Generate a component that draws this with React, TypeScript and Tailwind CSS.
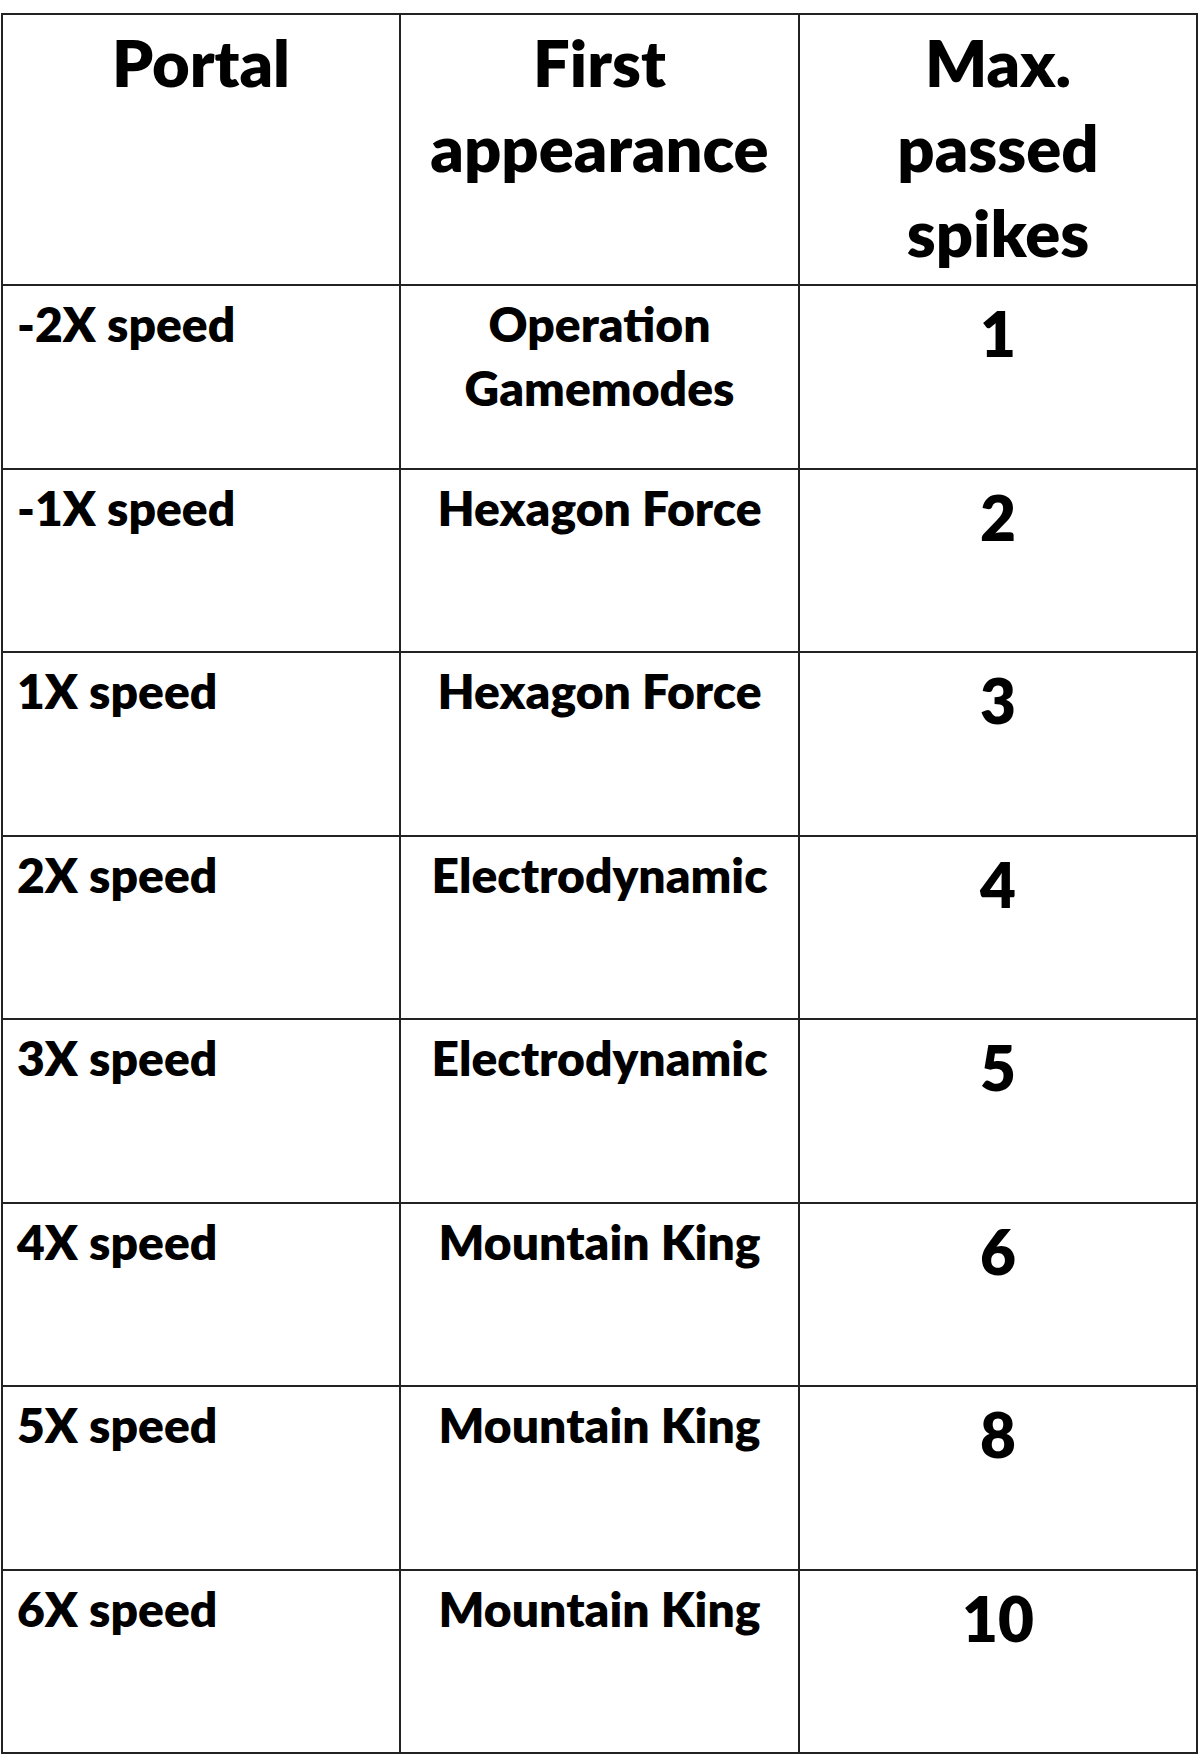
const rows: [string, string[], string][] = [
  ['-2X speed', ['Operation', 'Gamemodes'], '1'],
  ['-1X speed', ['Hexagon Force'], '2'],
  ['1X speed', ['Hexagon Force'], '3'],
  ['2X speed', ['Electrodynamic'], '4'],
  ['3X speed', ['Electrodynamic'], '5'],
  ['4X speed', ['Mountain King'], '6'],
  ['5X speed', ['Mountain King'], '8'],
  ['6X speed', ['Mountain King'], '10'],
]

const cell = 'border-r-2 border-b-2 border-[#222]'

export default function App() {
  return (
    <div className="min-h-[1756px] bg-white pt-[13px] pl-px font-['Lato',sans-serif] font-extrabold text-black">
      <div className="grid w-[1197px] grid-cols-[398px_399px_398px] border-l-2 border-t-2 border-[#222]">
        {/* header */}
        <div className={`${cell} h-[271px] pt-[5px] text-center text-[65px] leading-[85px]`}>Portal</div>
        <div className={`${cell} h-[271px] pt-[5px] text-center text-[65px] leading-[85px]`}>
          First
          <br />
          appearance
        </div>
        <div className={`${cell} h-[271px] pt-[5px] text-center text-[65px] leading-[85px]`}>
          Max.
          <br />
          passed
          <br />
          spikes
        </div>

        {rows.map(([portal, level, spikes]) => (
          <div key={portal} className="contents">
            <div className={`${cell} h-[183.5px] pt-[6px] pl-[14px] text-[48px] leading-[64px]`}>{portal}</div>
            <div className={`${cell} h-[183.5px] pt-[6px] text-center text-[48px] leading-[64px]`}>
              {level.map((l) => (
                <div key={l}>{l}</div>
              ))}
            </div>
            <div className={`${cell} h-[183.5px] pt-[10px] text-center text-[62px] leading-[74px]`}>{spikes}</div>
          </div>
        ))}
      </div>
    </div>
  )
}
